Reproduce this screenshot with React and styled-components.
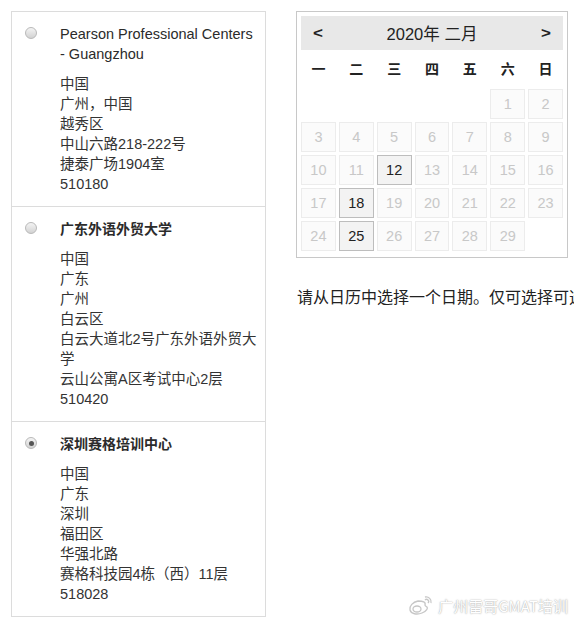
import * as React from 'react';
import styled, {createGlobalStyle} from 'styled-components';

const GlobalStyle = createGlobalStyle`
  html, body {
    margin: 0;
    padding: 0;
    background: #ffffff;
    overflow: hidden;
  }
  body {
    font-family: "Liberation Sans", "Noto Sans CJK SC", sans-serif;
    color: #333333;
  }
`;

const Page = styled.div`
  position: relative;
  display: flex;
  align-items: flex-start;
  gap: 30px;
  padding: 11px 0 0 11px;
  width: 574px;
  height: 623px;
  box-sizing: border-box;
  overflow: hidden;
`;

// Left column: list of test centres ===========================================
const CenterList = styled.div`
  flex: 0 0 255px;
  border: 1px solid #dcdcdc;
  box-sizing: border-box;
`;

const CenterItem = styled.label`
  display: grid;
  grid-template-columns: 35px 1fr;
  padding: 12px 4px 12px 13px;
  border-bottom: 1px solid #dcdcdc;

  &:last-child {
    border-bottom: none;
  }
`;

const RadioCell = styled.div`
  height: 20px;
  display: flex;
  align-items: center;
`;

const Radio = styled.span`
  position: relative;
  width: 12px;
  height: 12px;
  border-radius: 50%;
  box-sizing: border-box;
  border: 1px solid #b9b9b9;
  background: linear-gradient(#f4f4f4, #d2d2d2);
  margin-top: -2px;

  &:after {
    content: '';
    display: ${p => (p.$checked ? 'block' : 'none')};
    position: absolute;
    left: 2.5px;
    top: 2.5px;
    width: 5px;
    height: 5px;
    border-radius: 50%;
    background: #555555;
  }
`;

const CenterTitle = styled.div`
  font-size: ${p => (p.$latin ? '14.5px' : '14px')};
  font-weight: ${p => (p.$latin ? 400 : 700)};
  line-height: 20px;
  color: #2b2b2b;
`;

const Address = styled.div`
  margin-top: 10px;
  font-size: 14.5px;
  line-height: 20px;
  color: #333333;
`;

// Right column: calendar ======================================================
const RightColumn = styled.div`
  flex: 0 0 auto;
  display: flex;
  flex-direction: column;
`;

const Calendar = styled.div`
  width: 272px;
  border: 1px solid #c8c8c8;
  box-sizing: border-box;
  padding: 4px 4px 6px;
`;

const CalHeader = styled.div`
  display: flex;
  align-items: center;
  justify-content: space-between;
  height: 34px;
  padding: 0 12px 0 12px;
  background: #e8e8e8;
`;

const NavArrow = styled.span`
  font-size: 17px;
  font-weight: 700;
  color: #222222;
  transform: scaleY(0.9);
`;

const MonthTitle = styled.span`
  font-size: 16.5px;
  color: #222222;
`;

const DayGrid = styled.div`
  display: grid;
  grid-template-columns: repeat(7, 1fr);
  grid-template-rows: 36px;
  grid-auto-rows: 30px;
  gap: 3px;
`;

const WeekDay = styled.div`
  display: flex;
  align-items: center;
  justify-content: center;
  font-family: "Noto Sans CJK SC", sans-serif;
  font-size: 14px;
  font-weight: 700;
  color: #222222;
`;

const DayCell = styled.div`
  display: flex;
  align-items: center;
  justify-content: center;
  box-sizing: border-box;
  font-size: 14.5px;
  border: 1px solid ${p => (p.$active ? '#bdbdbd' : '#ececec')};
  background: ${p => (p.$active ? '#f3f3f3' : '#fbfbfb')};
  color: ${p => (p.$active ? '#222222' : '#c8c8c8')};
`;

const Hint = styled.p`
  margin: 27px 0 0 1px;
  font-family: "Noto Sans CJK SC", sans-serif;
  font-size: 16px;
  line-height: 22px;
  color: #222222;
  white-space: nowrap;
`;

// Watermark overlay ===========================================================
const Watermark = styled.div`
  position: absolute;
  right: 6px;
  bottom: 7px;
  display: flex;
  align-items: center;
  gap: 4px;
  font-family: "Noto Sans CJK SC", sans-serif;
  font-size: 15px;
  color: #ffffff;
  text-shadow: 0 0 1px #9a9a9a, 0 0 2px #bdbdbd;
  opacity: 0.85;
`;

const centers = [
  {
    name: 'Pearson Professional Centers - Guangzhou',
    latin: true,
    lines: ['中国', '广州，中国', '越秀区', '中山六路218-222号', '捷泰广场1904室', '510180'],
  },
  {
    name: '广东外语外贸大学',
    lines: ['中国', '广东', '广州', '白云区', '白云大道北2号广东外语外贸大学', '云山公寓A区考试中心2层', '510420'],
  },
  {
    name: '深圳赛格培训中心',
    checked: true,
    lines: ['中国', '广东', '深圳', '福田区', '华强北路', '赛格科技园4栋（西）11层', '518028'],
  },
];

const weekDays = ['一', '二', '三', '四', '五', '六', '日'];
const activeDays = [12, 18, 25];

const WeiboLogo = () => (
  <svg width="26" height="22" viewBox="0 0 26 22" fill="none" stroke="#bdbdbd" strokeWidth="1.3">
    <path d="M10 7c-5 1-9 5-8 9s7 5 12 3 6-5 5-6c-1-1-2-1-2-2 1-3-2-4-7-4z" fill="#ffffff" />
    <ellipse cx="9" cy="15" rx="4" ry="3" />
    <path d="M17 3a5 5 0 0 1 6 6" />
    <path d="M17 6a2 2 0 0 1 3 3" />
  </svg>
);

export default function App() {
  const cells = [];
  for (let i = 0; i < 5; i++) cells.push(<div key={`e${i}`} />);
  for (let d = 1; d <= 29; d++) {
    cells.push(
      <DayCell key={d} $active={activeDays.includes(d)}>
        {d}
      </DayCell>,
    );
  }

  return (
    <React.Fragment>
      <GlobalStyle />
      <Page>
        <CenterList>
          {centers.map(c => (
            <CenterItem key={c.name}>
              <RadioCell>
                <Radio $checked={c.checked} />
              </RadioCell>
              <div>
                <CenterTitle $latin={c.latin}>{c.name}</CenterTitle>
                <Address>
                  {c.lines.map(l => (
                    <div key={l}>{l}</div>
                  ))}
                </Address>
              </div>
            </CenterItem>
          ))}
        </CenterList>

        <RightColumn>
          <Calendar>
            <CalHeader>
              <NavArrow>&lt;</NavArrow>
              <MonthTitle>2020年 二月</MonthTitle>
              <NavArrow>&gt;</NavArrow>
            </CalHeader>
            <DayGrid>
              {weekDays.map(w => (
                <WeekDay key={w}>{w}</WeekDay>
              ))}
              {cells}
            </DayGrid>
          </Calendar>
          <Hint>请从日历中选择一个日期。仅可选择可选日期。</Hint>
        </RightColumn>

        <Watermark>
          <WeiboLogo />
          <span>广州雷哥GMAT培训</span>
        </Watermark>
      </Page>
    </React.Fragment>
  );
}
